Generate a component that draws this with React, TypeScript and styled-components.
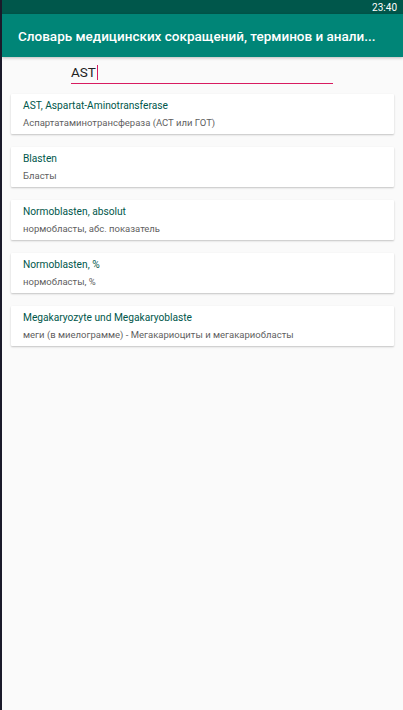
import styled, { createGlobalStyle } from 'styled-components';

const GlobalStyle = createGlobalStyle`
  html, body {
    margin: 0;
    padding: 0;
    background: #fafafa;
  }
  body {
    font-family: Roboto, 'Noto Sans', Arial, sans-serif;
  }
`;

const Screen = styled.div`
  width: 403px;
  height: 710px;
  display: flex;
  flex-direction: column;
  background: #fafafa;
  border-left: 2px solid #1a1a2a;
  box-sizing: border-box;
  overflow: hidden;
`;

const StatusBar = styled.div`
  height: 14px;
  background: #00574b;
  display: flex;
  align-items: center;
  justify-content: flex-end;
  padding: 0 6px;
  color: #fff;
  font-size: 10px;
`;

const AppBar = styled.div`
  height: 43px;
  background: #008577;
  display: flex;
  align-items: center;
  padding: 0 16px;
  color: #fff;
  font-size: 13.5px;
  font-weight: 500;
  white-space: nowrap;
  box-shadow: 0 1px 3px rgba(0, 0, 0, 0.25);
  position: relative;
  z-index: 1;
`;

const SearchRow = styled.div`
  padding: 6px 0 0 69px;
`;

const SearchField = styled.div`
  width: 262px;
  height: 18px;
  border-bottom: 1px solid #d81b60;
  display: flex;
  align-items: center;
  font-size: 13.5px;
  color: #222;
  padding-bottom: 2px;
`;

const Caret = styled.span`
  display: inline-block;
  width: 1px;
  height: 15px;
  background: #d81b60;
  margin-left: 1px;
`;

const List = styled.div`
  display: flex;
  flex-direction: column;
  gap: 13px;
  padding: 10px 9px 0 9px;
`;

const Card = styled.div`
  height: 40px;
  background: #fff;
  box-shadow: 0 1px 2px rgba(0, 0, 0, 0.22);
  border-radius: 1px;
  display: flex;
  flex-direction: column;
  justify-content: center;
  gap: 5px;
  padding: 0 12px;
`;

const Term = styled.div`
  color: #00574b;
  font-size: 10.2px;
  line-height: 12px;
`;

const Meaning = styled.div`
  color: #5f5f5f;
  font-size: 9.5px;
  line-height: 12px;
`;

const items = [
  { term: 'AST, Aspartat-Aminotransferase', meaning: 'Аспартатаминотрансфераза (АСТ или ГОТ)' },
  { term: 'Blasten', meaning: 'Бласты' },
  { term: 'Normoblasten, absolut', meaning: 'нормобласты, абс. показатель' },
  { term: 'Normoblasten, %', meaning: 'нормобласты, %' },
  { term: 'Megakaryozyte und Megakaryoblaste', meaning: 'меги (в миелограмме) - Мегакариоциты и мегакариобласты' },
];

export default function App() {
  return (
    <>
      <GlobalStyle />
      <Screen>
        <StatusBar>23:40</StatusBar>
        <AppBar>Словарь медицинских сокращений, терминов и анали...</AppBar>
        <SearchRow>
          <SearchField>
            AST<Caret />
          </SearchField>
        </SearchRow>
        <List>
          {items.map((it) => (
            <Card key={it.term}>
              <Term>{it.term}</Term>
              <Meaning>{it.meaning}</Meaning>
            </Card>
          ))}
        </List>
      </Screen>
    </>
  );
}
